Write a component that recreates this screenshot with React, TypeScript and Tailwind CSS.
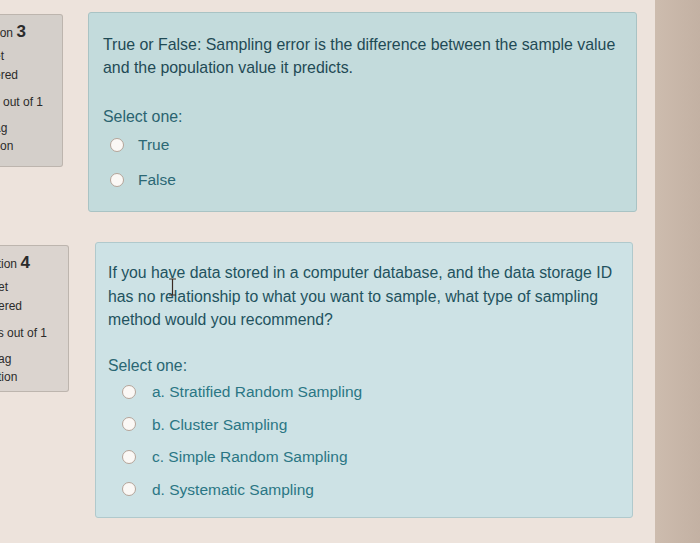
import React from 'react';

// Moodle quiz page, photographed at an angle: left info column is clipped off-screen.

interface InfoProps {
  num: string;
  shift: string; // inner offset class
  width: string;
  height: string;
  bg: string;
}

function InfoBox({ num, shift, width, height, bg }: InfoProps) {
  return (
    <div className={`${width} ${height} ${bg} overflow-hidden rounded-r-[3px] border border-l-0 border-[#bdb5ae] shrink-0`}>
      <div className={`${shift} w-[140px] pt-[9px] text-[12px] leading-[15px] text-[#2b2b2b]`}>
        <div className="flex items-baseline h-[20px]">
          <span>Questi</span>
          <span>on&nbsp;</span>
          <span className="text-[17px] font-bold">{num}</span>
        </div>
        <div className="mt-[5px] pl-[1px]">Not yet</div>
        <div className="mt-[4px] pl-[1px]">answered</div>
        <div className="mt-[12px] pl-[2px]">Marks out of 1</div>
        <div className="mt-[11px] pl-[19px]">Flag</div>
        <div className="mt-[3px] pl-[3px]">question</div>
      </div>
    </div>
  );
}

function Radio({ label, textGap, color }: { label: string; textGap: string; color: string }) {
  return (
    <div className="flex items-center">
      <span className="w-[14px] h-[14px] rounded-full bg-[#fbf8f5] border-[1.5px] border-[#b4a499] shrink-0" />
      <span className={`${textGap} ${color}`}>{label}</span>
    </div>
  );
}

export default function App() {
  return (
    <div
      className="relative w-[700px] h-[543px] overflow-hidden flex bg-[#ede3dc]"
      style={{ fontFamily: '"Liberation Sans", Arial, sans-serif' }}
    >
      <div className="flex-1 flex flex-col pt-[12px]">
        {/* Question 3 */}
        <div className="flex items-start">
          <div className="mt-[2px]">
            <InfoBox num="3" shift="-ml-[35px]" width="w-[63px]" height="h-[153px]" bg="bg-[#d4cfca]" />
          </div>
          <div className="ml-[25px] w-[549px] h-[200px] rounded-[3px] bg-[#c3dbdc] border border-[#a9c3c4] pl-[14px] pt-[20px] text-[15.9px] leading-[23px] whitespace-nowrap">
            <p className="text-[#1f4a55]">
              True or False: Sampling error is the difference between the sample value
              <br />
              and the population value it predicts.
            </p>
            <p className="mt-[26px] text-[#2a6370]">Select one:</p>
            <div className="mt-[5px] ml-[7px] flex flex-col gap-[12px] text-[15.5px]">
              <Radio label="True" textGap="ml-[14px]" color="text-[#2b6875]" />
              <Radio label="False" textGap="ml-[14px]" color="text-[#2b6875]" />
            </div>
          </div>
        </div>

        {/* Question 4 */}
        <div className="flex items-start mt-[30px]">
          <div className="mt-[3px]">
            <InfoBox num="4" shift="-ml-[31px]" width="w-[69px]" height="h-[147px]" bg="bg-[#dbd4cf]" />
          </div>
          <div className="relative ml-[26px] w-[538px] h-[276px] rounded-[3px] bg-[#cde2e5] border border-[#b0c9cc] pl-[12px] pt-[18px] text-[15.8px] leading-[23.5px] whitespace-nowrap">
            <p className="text-[#22525e]">
              If you have data stored in a computer database, and the data storage ID
              <br />
              has no relationship to what you want to sample, what type of sampling
              <br />
              method would you recommend?
            </p>
            <p className="mt-[22px] text-[#2a6773]">Select one:</p>
            <div className="mt-[3px] ml-[14px] flex flex-col gap-[9px] text-[15.5px]">
              <Radio label="a. Stratified Random Sampling" textGap="ml-[16px]" color="text-[#2a7684]" />
              <Radio label="b. Cluster Sampling" textGap="ml-[16px]" color="text-[#2a7684]" />
              <Radio label="c. Simple Random Sampling" textGap="ml-[16px]" color="text-[#2a7684]" />
              <Radio label="d. Systematic Sampling" textGap="ml-[16px]" color="text-[#2a7684]" />
            </div>
            {/* text cursor */}
            <svg className="absolute left-[72px] top-[35px]" width="9" height="18" viewBox="0 0 9 18">
              <path d="M1 1h7M4.5 1v16M1 17h7" stroke="#3a2a22" strokeWidth="1.2" fill="none" />
            </svg>
          </div>
        </div>
      </div>

      {/* monitor bezel edge */}
      <div className="w-[45px] bg-gradient-to-r from-[#cdbcae] to-[#c3b1a3]" />
    </div>
  );
}
